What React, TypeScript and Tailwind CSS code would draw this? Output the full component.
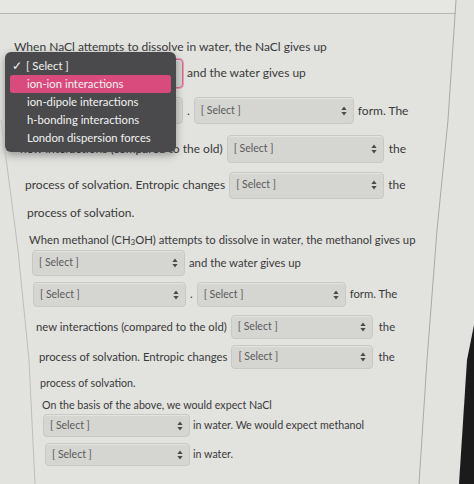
import type { ReactNode } from 'react';

function Arrows() {
  return (
    <svg width="6" height="10" viewBox="0 0 6 10" className="shrink-0">
      <path d="M3 0.5 L5.6 4 H0.4 Z" fill="#4a4a4a" />
      <path d="M3 9.5 L5.6 6 H0.4 Z" fill="#4a4a4a" />
    </svg>
  );
}

function Select({ className, focus }: { className: string; focus?: boolean }) {
  return (
    <div
      className={`flex shrink-0 items-center justify-between rounded-[4px] border bg-[#d5d5d2] pl-[6px] pr-[6px] text-[10.5px] text-[#5a5a5a] shadow-[inset_0_1px_0_rgba(255,255,255,0.35)] ${
        focus ? 'border-[#d86a92] ring-1 ring-[#e79bb6]' : 'border-[#c8c8c5]'
      } ${className}`}
    >
      <span>[ Select ]</span>
      <Arrows />
    </div>
  );
}

function Row({ className, children }: { className: string; children: ReactNode }) {
  return <div className={`flex items-center whitespace-nowrap ${className}`}>{children}</div>;
}

const MENU = ['ion-ion interactions', 'ion-dipole interactions', 'h-bonding interactions', 'London dispersion forces'];

export default function App() {
  return (
    <div className="relative h-[484px] w-[474px] overflow-hidden bg-[#e2e2df] font-['Lato','Noto_Sans',sans-serif] text-[#3a3a3a]">
      <div className="h-[14px] w-[456px] border-b border-[#b5b5b2] bg-[#e6e6e3]" />

      <div className="flex flex-col text-[12px]">
        <Row className="ml-[14px] mt-[24px] h-[18px]">When NaCl attempts to dissolve in water, the NaCl gives up</Row>
        <Row className="ml-[18px] mt-[2px] h-[30px]">
          <Select className="h-[29px] w-[165px]" focus />
          <span className="ml-[4px]">and the water gives up</span>
        </Row>
        <Row className="ml-[18px] mt-[8px] h-[29px]">
          <Select className="h-[27px] w-[165px]" />
          <span className="mx-[4px]">.</span>
          <Select className="h-[27px] w-[160px]" />
          <span className="ml-[4px]">form. The</span>
        </Row>
        <Row className="ml-[20px] mt-[9px] h-[30px]">
          <span>new interactions (compared to the old)</span>
          <Select className="ml-[4px] h-[28px] w-[157px]" />
          <span className="ml-[5px]">the</span>
        </Row>
        <Row className="ml-[25px] mt-[7px] h-[28px]">
          <span>process of solvation. Entropic changes</span>
          <Select className="ml-[4px] h-[27px] w-[155px]" />
          <span className="ml-[4px]">the</span>
        </Row>
        <Row className="ml-[27px] mt-[5px] h-[18px]">process of solvation.</Row>
      </div>

      <div className="flex flex-col text-[11.3px]">
        <Row className="ml-[29px] mt-[9px] h-[18px]">
          When methanol (CH<sub className="text-[8px]">3</sub>OH) attempts to dissolve in water, the methanol gives up
        </Row>
        <Row className="ml-[32px] mt-0 h-[28px]">
          <Select className="h-[26px] w-[153px]" />
          <span className="ml-[4px]">and the water gives up</span>
        </Row>
        <Row className="ml-[33px] mt-[4px] h-[27px]">
          <Select className="h-[25px] w-[153px]" />
          <span className="mx-[4px]">.</span>
          <Select className="h-[25px] w-[149px]" />
          <span className="ml-[4px]">form. The</span>
        </Row>
        <Row className="ml-[36px] mt-[6px] h-[26px]">
          <span>new interactions (compared to the old)</span>
          <Select className="ml-[4px] h-[24px] w-[142px]" />
          <span className="ml-[6px]">the</span>
        </Row>
        <Row className="ml-[39px] mt-[5px] h-[24px]">
          <span>process of solvation. Entropic changes</span>
          <Select className="ml-[4px] h-[24px] w-[142px]" />
          <span className="ml-[5px]">the</span>
        </Row>
      </div>

      <div className="flex flex-col text-[10.7px]">
        <Row className="ml-[40px] mt-[6px] h-[16px]">process of solvation.</Row>
        <Row className="ml-[42px] mt-[6px] h-[16px]">On the basis of the above, we would expect NaCl</Row>
        <Row className="ml-[43px] mt-[1px] h-[23px]">
          <Select className="h-[23px] w-[147px]" />
          <span className="ml-[3px]">in water. We would expect methanol</span>
        </Row>
        <Row className="ml-[45px] mt-[6px] h-[23px]">
          <Select className="h-[23px] w-[145px]" />
          <span className="ml-[3px]">in water.</span>
        </Row>
      </div>

      {/* open dropdown */}
      <div className="absolute left-[5px] top-[52px] w-[171px] rounded-[6px] bg-[#4a4a4c] px-[5px] py-[5px] text-[11.3px] text-[#f2f2f2] shadow-[0_3px_8px_rgba(0,0,0,0.35)]">
        <div className="flex h-[18px] items-center pl-[2px]">
          <span className="mr-[4px] text-[12px]">✓</span>[ Select ]
        </div>
        {MENU.map((item, i) => (
          <div
            key={item}
            className={`flex h-[18px] items-center rounded-[3px] pl-[17px] ${i === 0 ? 'bg-[#d94a7d]' : ''}`}
          >
            {item}
          </div>
        ))}
      </div>

      {/* page edges from the photo */}
      <svg className="pointer-events-none absolute inset-0" width="474" height="484" viewBox="0 0 474 484">
        <polyline points="456,0 448,120 437,230 427,360 419,484" fill="none" stroke="#a9a9a6" strokeWidth="1" />
        <polyline points="1,120 18,250 29,360 35,484" fill="none" stroke="#bdbdba" strokeWidth="1" />
        <polygon points="474,325 467,360 459,484 474,484" fill="#1b1b1c" />
      </svg>
    </div>
  );
}
